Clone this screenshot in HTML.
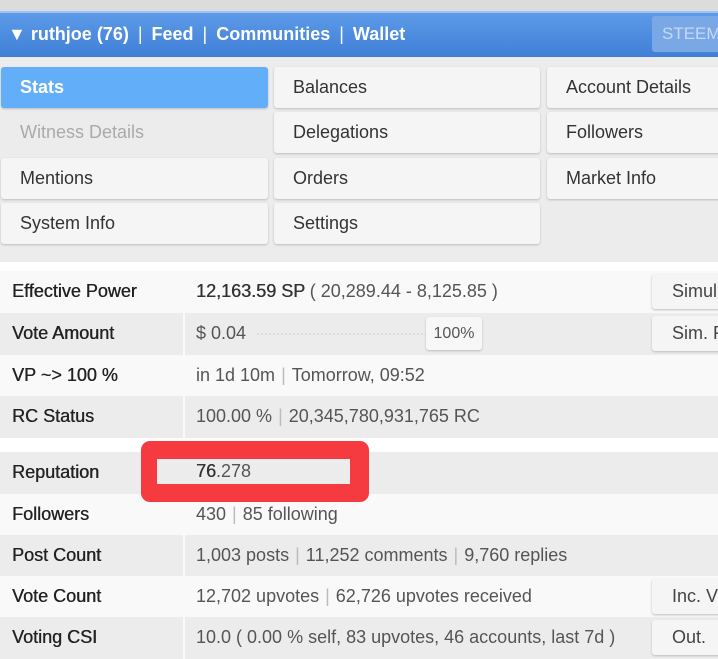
<!DOCTYPE html>
<html><head><meta charset="utf-8"><style>
*{margin:0;padding:0;box-sizing:border-box}
body{width:718px;height:659px;overflow:hidden;background:#fff;font-family:"Liberation Sans",sans-serif;color:#333;position:relative}
.top{position:absolute;left:0;top:0;width:718px;height:11px;background:#dcdcdc}
.bar{position:absolute;left:0;top:11px;width:718px;height:46px;background:linear-gradient(#5d9ae8,#3f7fd6);border-top:2px solid #9cc4f2;color:#fff;font-weight:bold;font-size:18px;line-height:42px;padding-left:8px}
.bar .sep{font-weight:normal;margin:0 9px}
.steem{position:absolute;left:652px;top:3px;width:80px;height:36px;background:#7aa8e6;border-radius:3px;color:#c5d8f3;font-weight:normal;font-size:17px;line-height:36px;padding-left:10px}
.nav{position:absolute;left:0;top:57px;width:718px;height:205px;background:#ececec}
.b{position:absolute;height:41px;background:#f5f5f5;border-radius:3px;box-shadow:0 1px 2px #bbb;font-size:18px;line-height:40px;padding-left:19px;color:#333}
.sel{background:#63aef9;color:#fff;font-weight:bold}
.dis{background:#ececec;color:#aaa;box-shadow:none}
.row{position:absolute;left:0;width:718px;height:42px;font-size:18px;line-height:40px}
.row .l{position:absolute;left:0;top:0;width:185px;height:100%;padding-left:12px;color:#222;text-shadow:0.4px 0 0 #222;border-right:2px solid #fafafa}
.row .v{position:absolute;left:196px;top:0;color:#555;white-space:nowrap}
.w{background:#f9f9f9}.g{background:#ececec}
.p{color:#bbb;margin:0 6px}
.btn{position:absolute;left:652px;top:3px;width:80px;height:35px;background:#f5f5f5;box-shadow:0 1px 2px #bbb;border-radius:3px;padding-left:20px;line-height:34px;color:#444}
</style></head><body>
<div class="top"></div>
<div class="bar">▼ ruthjoe (76)<span class="sep">|</span>Feed<span class="sep">|</span>Communities<span class="sep">|</span>Wallet<div class="steem">STEEM</div></div>
<div class="nav">
<div class="b sel" style="left:1px;top:10px;width:267px">Stats</div>
<div class="b" style="left:274px;top:10px;width:266px">Balances</div>
<div class="b" style="left:547px;top:10px;width:180px">Account Details</div>
<div class="b dis" style="left:1px;top:55px;width:267px">Witness Details</div>
<div class="b" style="left:274px;top:55px;width:266px">Delegations</div>
<div class="b" style="left:547px;top:55px;width:180px">Followers</div>
<div class="b" style="left:1px;top:101px;width:267px">Mentions</div>
<div class="b" style="left:274px;top:101px;width:266px">Orders</div>
<div class="b" style="left:547px;top:101px;width:180px">Market Info</div>
<div class="b" style="left:1px;top:146px;width:267px">System Info</div>
<div class="b" style="left:274px;top:146px;width:266px">Settings</div>
</div>
<div class="row w" style="top:271px"><div class="l">Effective Power</div><div class="v"><span style="color:#333;text-shadow:0.4px 0 0 #333">12,163.59 SP</span> ( 20,289.44 - 8,125.85 )</div><div class="btn">Simul</div></div>
<div class="row g" style="top:313px"><div class="l">Vote Amount</div><div class="v">$ 0.04 <span style="display:inline-block;width:170px;border-top:2px dotted #ddd;vertical-align:middle;margin-left:6px"></span></div><div style="position:absolute;left:426px;top:4px;width:56px;height:33px;background:#f7f7f7;box-shadow:0 1px 2px #bbb;border-radius:3px;text-align:center;line-height:33px;font-size:16px;color:#555">100%</div><div class="btn">Sim. R</div></div>
<div class="row w" style="top:355px"><div class="l">VP ~&gt; 100 %</div><div class="v">in 1d 10m<span class="p">|</span>Tomorrow, 09:52</div></div>
<div class="row g" style="top:396px"><div class="l">RC Status</div><div class="v">100.00 %<span class="p">|</span>20,345,780,931,765 RC</div></div>
<div class="row g" style="top:452px"><div class="l">Reputation</div></div>
<div class="row w" style="top:494px"><div class="l">Followers</div><div class="v">430<span class="p">|</span>85 following</div></div>
<div class="row g" style="top:535px"><div class="l">Post Count</div><div class="v">1,003 posts<span class="p">|</span>11,252 comments<span class="p">|</span>9,760 replies</div></div>
<div class="row w" style="top:576px"><div class="l">Vote Count</div><div class="v">12,702 upvotes<span class="p">|</span>62,726 upvotes received</div><div class="btn">Inc. V</div></div>
<div class="row g" style="top:617px"><div class="l">Voting CSI</div><div class="v">10.0 ( 0.00 % self, 83 upvotes, 46 accounts, last 7d )</div><div class="btn">Out.</div></div>
<div style="position:absolute;left:141px;top:441px;width:228px;height:61px;background:#f53b3f;border-radius:9px"></div>
<div style="position:absolute;left:157px;top:459px;width:193px;height:25px;background:#ececec;font-size:18px;line-height:25px;padding-left:39px;color:#555"><span style="color:#333;text-shadow:0.4px 0 0 #333">76</span>.278</div>
</body></html>
